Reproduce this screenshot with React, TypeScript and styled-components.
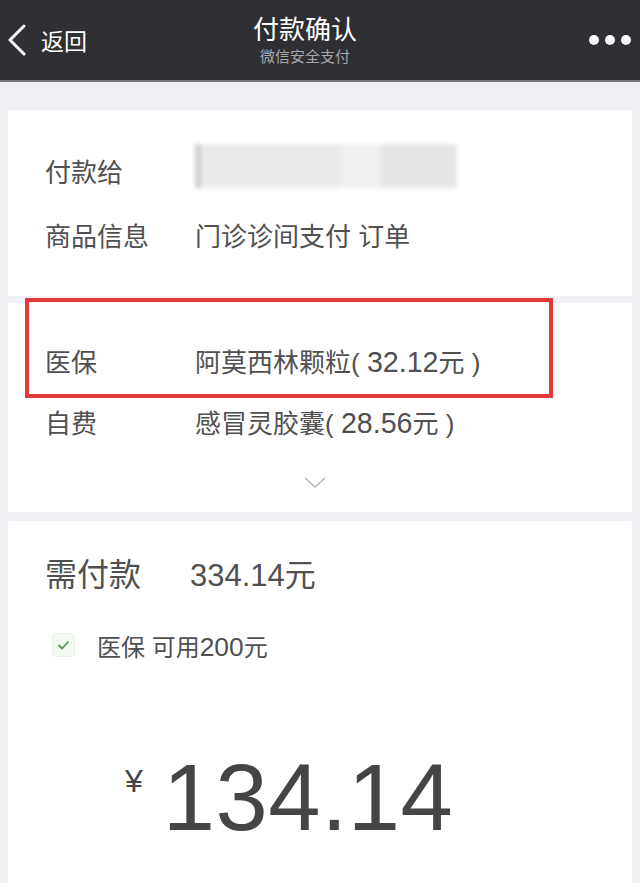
import React from "react";
import styled, { createGlobalStyle } from "styled-components";

const Global = createGlobalStyle`
  html, body { margin: 0; padding: 0; }
  body {
    background: #efeff4;
    font-family: "Liberation Sans", "Noto Sans CJK SC", sans-serif;
    color: #505050;
  }
`;

const Page = styled.div`
  width: 640px;
  height: 883px;
  display: flex;
  flex-direction: column;
  overflow: hidden;
  background: #efeff4;
`;

const Header = styled.header`
  height: 80px;
  flex: none;
  display: flex;
  align-items: center;
  background: #2e2e33;
  border-bottom: 2px solid #75757a;
`;

const Back = styled.div`
  width: 100px;
  display: flex;
  align-items: center;
  gap: 14px;
  padding-left: 7px;
  box-sizing: border-box;
  color: #fff;
  font-size: 23px;
`;

const TitleBlock = styled.div`
  flex: 1;
  display: flex;
  flex-direction: column;
  align-items: center;
  gap: 4px;
`;

const Title = styled.div`
  color: #fff;
  font-size: 26px;
  line-height: 28px;
`;

const Subtitle = styled.div`
  color: #a8a8ad;
  font-size: 15px;
  line-height: 17px;
`;

const More = styled.div`
  width: 130px;
  display: flex;
  justify-content: flex-end;
  gap: 6px;
  padding-right: 9px;
  box-sizing: border-box;
`;

const Dot = styled.span`
  width: 10px;
  height: 10px;
  border-radius: 50%;
  background: #fff;
`;

const Card = styled.section<{ $top: number; $pt: number; $pb: number; $grow?: boolean }>`
  position: relative;
  margin: ${(p) => p.$top}px 8px 0;
  padding: ${(p) => p.$pt}px 37px ${(p) => p.$pb}px;
  background: #fff;
  ${(p) => (p.$grow ? "flex: 1;" : "")}
`;

const Row = styled.div<{ $h: number }>`
  display: flex;
  align-items: center;
  height: ${(p) => p.$h}px;
  font-size: 26px;
  line-height: 30px;
  color: #505050;
`;

const Label = styled.span`
  width: 150px;
  flex: none;
`;

const Value = styled.span`
  white-space: nowrap;
`;

const Num = styled.span`
  font-size: 1.1em;
`;

const Redacted = styled.div`
  display: flex;
  height: 44px;
  width: 262px;
  filter: blur(2px);
  margin-top: -14px;
`;

const Blot = styled.div<{ $w: number; $c: string }>`
  width: ${(p) => p.$w}px;
  background: ${(p) => p.$c};
`;

const Highlight = styled.div`
  position: absolute;
  left: 17px;
  top: -5px;
  width: 528px;
  height: 100px;
  box-sizing: border-box;
  border: 4px solid #e23a3c;
  pointer-events: none;
`;

const Expand = styled.div`
  height: 58px;
  display: flex;
  align-items: center;
  justify-content: center;
  padding-right: 10px;
`;

const Summary = styled.div`
  display: flex;
  align-items: center;
  height: 50px;
  color: #505050;
`;

const SummaryLabel = styled.span`
  width: 145px;
  font-size: 32px;
`;

const SummaryValue = styled.span`
  font-size: 31px;
`;

const CheckRow = styled.div`
  display: flex;
  align-items: center;
  gap: 22px;
  height: 40px;
  margin-top: 28px;
  padding-left: 7px;
  font-size: 24px;
  color: #505050;
`;

const CheckBox = styled.span`
  width: 23px;
  height: 24px;
  border-radius: 4px;
  background: #f1f9f1;
  border: 1px solid #e6f2e6;
  box-sizing: border-box;
  display: flex;
  align-items: center;
  justify-content: center;
`;

const Amount = styled.div`
  display: flex;
  align-items: flex-start;
  margin-top: 85px;
  padding-left: 80px;
  color: #454545;
`;

const Yen = styled.span`
  font-size: 32px;
  line-height: 32px;
  margin-top: 15px;
  margin-right: 20px;
`;

const Big = styled.span`
  font-size: 94px;
  line-height: 96px;
  letter-spacing: 0.5px;
`;

export default function App() {
  return (
    <Page>
      <Global />
      <Header>
        <Back>
          <svg width="20" height="32" viewBox="0 0 20 32">
            <path d="M17 2 L3 16 L17 30" fill="none" stroke="#fff" strokeWidth="3" strokeLinecap="round" strokeLinejoin="round" />
          </svg>
          <span>返回</span>
        </Back>
        <TitleBlock>
          <Title>付款确认</Title>
          <Subtitle>微信安全支付</Subtitle>
        </TitleBlock>
        <More>
          <Dot />
          <Dot />
          <Dot />
        </More>
      </Header>

      <Card $top={28} $pt={31} $pb={27}>
        <Row $h={64}>
          <Label>付款给</Label>
          <Redacted>
            <Blot $w={6} $c="#cfcfcf" />
            <Blot $w={140} $c="#ebebeb" />
            <Blot $w={40} $c="#f1f1f1" />
            <Blot $w={76} $c="#e6e6e6" />
          </Redacted>
        </Row>
        <Row $h={64}>
          <Label>商品信息</Label>
          <Value>门诊诊间支付 订单</Value>
        </Row>
      </Card>

      <Card $top={7} $pt={29} $pb={0}>
        <Highlight />
        <Row $h={61}>
          <Label>医保</Label>
          <Value>
            阿莫西林颗粒( <Num>32.12</Num>元 )
          </Value>
        </Row>
        <Row $h={61}>
          <Label>自费</Label>
          <Value>
            感冒灵胶囊( <Num>28.56</Num>元 )
          </Value>
        </Row>
        <Expand>
          <svg width="22" height="12" viewBox="0 0 22 12">
            <path d="M1 1 L11 10 L21 1" fill="none" stroke="#b5b5b5" strokeWidth="1.6" />
          </svg>
        </Expand>
      </Card>

      <Card $top={9} $pt={26} $pb={0} $grow>
        <Summary>
          <SummaryLabel>需付款</SummaryLabel>
          <SummaryValue>334.14元</SummaryValue>
        </Summary>
        <CheckRow>
          <CheckBox>
            <svg width="13" height="10" viewBox="0 0 13 10">
              <path d="M1.5 5 L5 8.5 L11.5 1.5" fill="none" stroke="#4f9a55" strokeWidth="1.8" />
            </svg>
          </CheckBox>
          <span>
            医保 可用<Num>200</Num>元
          </span>
        </CheckRow>
        <Amount>
          <Yen>¥</Yen>
          <Big>134.14</Big>
        </Amount>
      </Card>
    </Page>
  );
}
